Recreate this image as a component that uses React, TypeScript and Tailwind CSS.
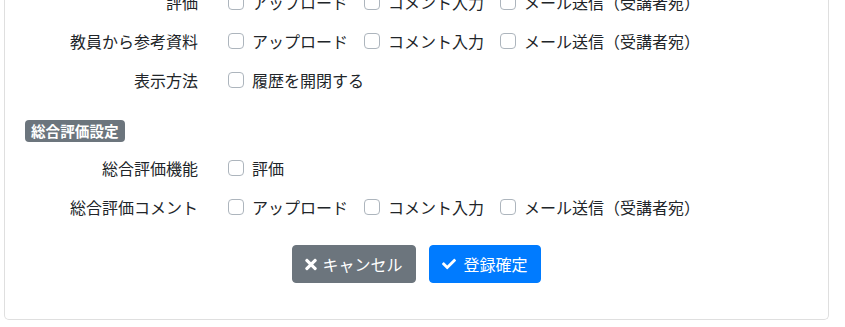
import { FaCheck, FaTimes } from "react-icons/fa"

const font = { fontFamily: '"Noto Sans CJK JP", "Noto Sans", sans-serif' }

function Box({ label }: { label: string }) {
  return (
    <label className="flex items-center mr-4">
      <span className="w-4 h-4 rounded-[4px] border border-[#adb5bd] bg-white shrink-0" />
      <span className="ml-2">{label}</span>
    </label>
  )
}

function Row({ title, options }: { title: string; options: string[] }) {
  return (
    <div className="flex items-center h-[39px]">
      <div className="w-[193px] text-right shrink-0">{title}</div>
      <div className="flex items-center pl-[30px]">
        {options.map((o) => (
          <Box key={o} label={o} />
        ))}
      </div>
    </div>
  )
}

const three = ["アップロード", "コメント入力", "メール送信（受講者宛）"]

export default function App() {
  return (
    <div className="w-[845px] h-[327px] overflow-hidden bg-white text-[16px] text-[#212529] leading-6" style={font}>
      <div className="ml-[4px] mr-[16px] -mt-[18px] border-x border-b border-[#dfdfdf] rounded-b-[5px] pb-[36px]">
        <Row title="評価" options={three} />
        <Row title="教員から参考資料" options={three} />
        <Row title="表示方法" options={["履歴を開閉する"]} />

        <div className="flex mt-[21px] ml-[20px]">
          <span className="flex items-center h-[22px] px-[6px] rounded-[4px] bg-[#6c757d] text-white text-[14.6px] font-bold leading-none">
            総合評価設定
          </span>
        </div>

        <div className="mt-[6px]">
          <Row title="総合評価機能" options={["評価"]} />
          <Row title="総合評価コメント" options={three} />
        </div>

        <div className="flex justify-center gap-[13px] mt-[19px]">
          <button className="flex items-center h-[38px] px-3 rounded-[4px] bg-[#6c757d] border border-[#6c757d] text-white">
            <FaTimes className="w-[12px] h-[17px] mr-[5px]" />
            キャンセル
          </button>
          <button className="flex items-center h-[38px] px-3 rounded-[4px] bg-[#007bff] border border-[#007bff] text-white">
            <FaCheck className="w-[14px] h-[14px] mr-[8px]" />
            登録確定
          </button>
        </div>
      </div>
    </div>
  )
}
